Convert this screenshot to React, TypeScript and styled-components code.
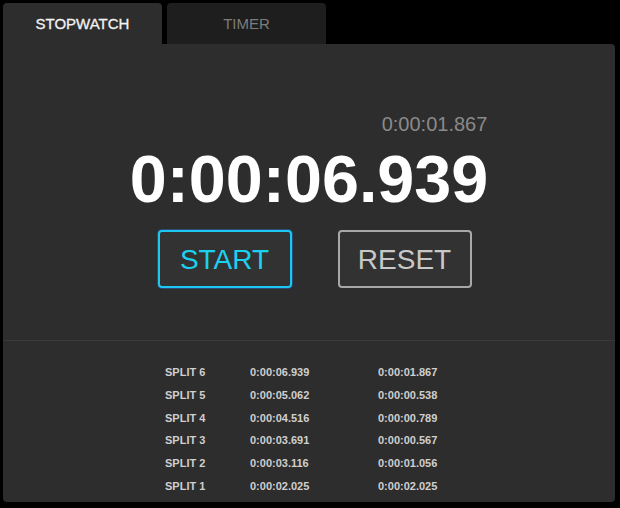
import { createGlobalStyle, styled } from 'styled-components';

const GlobalStyle = createGlobalStyle`
  html, body {
    margin: 0;
    padding: 0;
    background: #000;
  }
  body {
    font-family: "Liberation Sans", Arial, sans-serif;
  }
`;

const splits = [
  { name: 'SPLIT 6', total: '0:00:06.939', lap: '0:00:01.867' },
  { name: 'SPLIT 5', total: '0:00:05.062', lap: '0:00:00.538' },
  { name: 'SPLIT 4', total: '0:00:04.516', lap: '0:00:00.789' },
  { name: 'SPLIT 3', total: '0:00:03.691', lap: '0:00:00.567' },
  { name: 'SPLIT 2', total: '0:00:03.116', lap: '0:00:01.056' },
  { name: 'SPLIT 1', total: '0:00:02.025', lap: '0:00:02.025' },
];

export default function App() {
  return (
    <>
      <GlobalStyle />
      <Wrapper>
        <Tabs>
          <Tab $active>STOPWATCH</Tab>
          <Tab>TIMER</Tab>
        </Tabs>
        <Panel>
          <Clock>
            <TimeBlock>
              <LapTime>0:00:01.867</LapTime>
              <MainTime>0:00:06.939</MainTime>
            </TimeBlock>
            <Buttons>
              <Button $variant="start">START</Button>
              <Button $variant="reset">RESET</Button>
            </Buttons>
          </Clock>
          <SplitList>
            {splits.map((s) => (
              <SplitRow key={s.name}>
                <span>{s.name}</span>
                <span>{s.total}</span>
                <span>{s.lap}</span>
              </SplitRow>
            ))}
          </SplitList>
        </Panel>
      </Wrapper>
    </>
  );
}

const Wrapper = styled.div`
  padding: 3px;
  width: 612px;
`;

const Tabs = styled.div`
  display: flex;
  gap: 5px;
`;

const Tab = styled.div<{ $active?: boolean }>`
  width: 159px;
  height: 41px;
  display: flex;
  align-items: center;
  justify-content: center;
  border-radius: 4px 4px 0 0;
  background: ${(p) => (p.$active ? '#2d2d2d' : '#1e1e1e')};
  color: ${(p) => (p.$active ? '#f2f2f2' : '#7c7c7c')};
  font-size: 15px;
  -webkit-text-stroke: ${(p) => (p.$active ? '0.3px #f2f2f2' : '0')};
`;

const Panel = styled.div`
  height: 458px;
  background: #2d2d2d;
  border-radius: 0 4px 4px 4px;
  display: flex;
  flex-direction: column;
`;

const Clock = styled.div`
  height: 297px;
  box-sizing: border-box;
  padding-top: 70px;
  border-bottom: 1px solid #3a3a3a;
  display: flex;
  flex-direction: column;
  align-items: center;
`;

const TimeBlock = styled.div`
  display: flex;
  flex-direction: column;
  align-items: flex-end;
  gap: 12px;
`;

const LapTime = styled.div`
  font-size: 20px;
  line-height: 1;
  color: #8a8a8a;
  margin-right: 1px;
`;

const MainTime = styled.div`
  font-size: 66.5px;
  line-height: 1;
  font-weight: bold;
  color: #fff;
`;

const Buttons = styled.div`
  display: flex;
  gap: 46px;
  margin-top: 17px;
  margin-left: 11px;
`;

const Button = styled.button<{ $variant: 'start' | 'reset' }>`
  width: 134px;
  height: 58px;
  box-sizing: border-box;
  border-radius: 4px;
  background: #323232;
  font-family: "Liberation Sans", Arial, sans-serif;
  font-size: 28px;
  padding: 3px 0 0;
  cursor: pointer;
  border: 2px solid ${(p) => (p.$variant === 'start' ? '#1cc8ef' : '#a8a8a8')};
  color: ${(p) => (p.$variant === 'start' ? '#1cd0f0' : '#c8c8c8')};
  box-shadow: ${(p) => (p.$variant === 'start' ? '0 0 0 1px #2a4a78' : 'none')};
`;

const SplitList = styled.div`
  padding: 20px 0 0 162px;
  display: grid;
  grid-template-columns: 85px 128px auto;
  grid-auto-rows: 22.7px;
  align-items: center;
  justify-content: start;
`;

const SplitRow = styled.div`
  display: contents;
  font-size: 11px;
  font-weight: bold;
  color: #cfcfcf;
`;
